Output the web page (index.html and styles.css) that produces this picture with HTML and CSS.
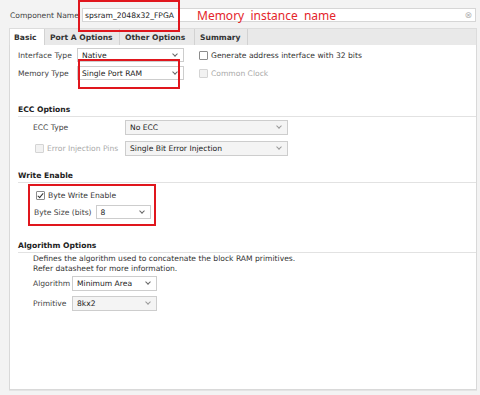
FILE: index.html
```html
<!DOCTYPE html>
<html lang="en">
<head>
  <meta charset="UTF-8" />
  <title>Block Memory Generator</title>
  <link rel="stylesheet" href="styles.css">
</head>
<body>

<div class="top">
  <span class="top-label">Component Name</span>
  <div class="name-input">
    <span class="name-value">spsram_2048x32_FPGA</span>
    <span class="note">Memory&nbsp; instance&nbsp; name</span>
    <span class="clear">&#x2297;</span>
  </div>
  <div class="mark mark-name"></div>
</div>

<div class="tabs">
  <div class="tab active">Basic</div>
  <div class="tab">Port A Options</div>
  <div class="tab">Other Options</div>
  <div class="tab">Summary</div>
</div>

<div class="panel">

  <div class="iface">
    <span class="label">Interface Type</span>
    <div class="select w-iface"><span>Native</span><i class="chev"></i></div>
    <label class="check"><span class="box"></span>Generate address interface with 32 bits</label>

    <span class="label">Memory Type</span>
    <div class="select w-iface"><span>Single Port RAM</span><i class="chev"></i></div>
    <label class="check disabled"><span class="box"></span>Common Clock</label>
    <div class="mark mark-type"></div>
  </div>

  <div class="section">ECC Options</div>
  <div class="rows ecc">
    <span class="label">ECC Type</span>
    <div class="select w-ecc dim"><span>No ECC</span><i class="chev"></i></div>
    <label class="check disabled"><span class="box"></span>Error Injection Pins</label>
    <div class="select w-ecc dim"><span>Single Bit Error Injection</span><i class="chev"></i></div>
  </div>

  <div class="section">Write Enable</div>
  <div class="write-box">
    <label class="check"><span class="box checked"></span>Byte Write Enable</label>
    <div class="inline">
      <span class="label">Byte Size (bits)</span>
      <div class="select w-byte"><span>8</span><i class="chev"></i></div>
    </div>
  </div>

  <div class="section">Algorithm Options</div>
  <div class="desc">
    Defines the algorithm used to concatenate the block RAM primitives.<br>
    Refer datasheet for more information.
  </div>
  <div class="rows algo">
    <span class="label">Algorithm</span>
    <div class="select w-algo"><span>Minimum Area</span><i class="chev"></i></div>
    <span class="label">Primitive</span>
    <div class="select w-algo dim"><span>8kx2</span><i class="chev"></i></div>
  </div>

</div>

</body>
</html>
```

FILE: styles.css
```css
* {
  box-sizing: border-box;
}

html, body {
  margin: 0;
  padding: 0;
  height: 100%;
  background: #f3f3f3;
  font-family: 'DejaVu Sans', sans-serif;
  font-size: 7.6px;
  color: #333;
  white-space: nowrap;
}

/* component name */

.top {
  position: relative;
  display: flex;
  align-items: center;
  height: 28px;
  padding: 2px 4px 0 10px;
}

.top-label {
  width: 72px;
  color: #444;
}

.name-input {
  flex: 1;
  display: flex;
  align-items: center;
  height: 14px;
  background: white;
  border: 1px solid #d6d6d6;
  padding: 0 3px 0 2px;
}

.name-value {
  width: 112px;
  color: #222;
}

.note {
  flex: 1;
  font-family: 'Noto Sans', sans-serif;
  font-size: 12px;
  color: #e4252b;
}

.clear {
  color: #b5b5b5;
  font-size: 9px;
}

.mark {
  position: absolute;
  border: 2px solid #e0161d;
}

.mark-name {
  left: 78px;
  top: 0;
  width: 102px;
  height: 32px;
}

/* tabs */

.tabs {
  display: flex;
  height: 17px;
  margin: 0 3px 0 9px;
  background: #e9e9e9;
  border: 1px solid #dcdcdc;
  border-bottom: none;
}

.tab {
  display: flex;
  align-items: center;
  padding: 0 5px;
  font-weight: bold;
  color: #333;
  border-right: 1px solid #d2d2d2;
}

.tab.active {
  width: 35px;
  background: white;
  padding-left: 4px;
}

.tab:nth-child(2),
.tab:nth-child(3) {
  width: 75px;
}

.tab:nth-child(4) {
  width: 53px;
}

/* panel */

.panel {
  height: 345px;
  margin: 0 3px 0 9px;
  padding: 3px 0 0 8px;
  background: white;
  border: 1px solid #d9d9d9;
  border-top: none;
  box-shadow: 0 1px 0 #e4e4e4;
}

.label {
  color: #444;
}

.iface {
  position: relative;
  display: grid;
  grid-template-columns: 59px 107px auto;
  row-gap: 4px;
  align-items: center;
}

.iface .check {
  margin-left: 15px;
}

.mark-type {
  left: 60px;
  top: 11px;
  width: 102px;
  height: 30px;
}

.select {
  display: flex;
  align-items: center;
  justify-content: space-between;
  height: 14px;
  padding: 0 6px 0 4px;
  background: white;
  border: 1px solid #cdcdcd;
  color: #222;
}

.select.dim {
  background: #f4f4f4;
}

.chev {
  width: 4px;
  height: 4px;
  margin-top: -3px;
  border-right: 1px solid #666;
  border-bottom: 1px solid #666;
  transform: rotate(45deg);
}

.select.dim .chev {
  border-color: #999;
}

.w-iface { width: 107px; }
.w-ecc { width: 163px; height: 15px; }
.w-byte { width: 55px; }
.w-algo { width: 85px; height: 15px; }

.check {
  display: flex;
  align-items: center;
  gap: 3px;
  color: #333;
}

.check.disabled {
  color: #aaa;
}

.box {
  width: 9px;
  height: 9px;
  border: 1px solid #8c8c8c;
  border-radius: 1px;
  background: white;
}

.check.disabled .box {
  border-color: #d4d4d4;
  background: #f2f2f2;
}

.box.checked {
  position: relative;
}

.box.checked::after {
  content: "";
  position: absolute;
  left: 2px;
  top: 0;
  width: 2px;
  height: 5px;
  border-right: 1.3px solid #333;
  border-bottom: 1.3px solid #333;
  transform: rotate(40deg);
}

/* sections */

.section {
  height: 13px;
  line-height: 12px;
  font-weight: bold;
  color: #222;
  border-bottom: 1px solid #e2e2e2;
  margin-top: 24px;
}

.rows {
  display: grid;
  align-items: center;
  padding-left: 15px;
  margin-top: 3px;
}

.ecc {
  grid-template-columns: 92px auto;
  row-gap: 6px;
}

.ecc .check {
  padding-left: 2px;
}

.ecc + .section,
.write-box + .section {
  margin-top: 14px;
}

.write-box {
  display: flex;
  flex-direction: column;
  gap: 5px;
  width: 128px;
  height: 42px;
  margin: 1px 0 0 10px;
  padding: 5px 0 0 4px;
  border: 2px solid #e0161d;
}

.write-box .check {
  padding-left: 2px;
}

.inline {
  display: flex;
  align-items: center;
  gap: 4px;
}

.desc {
  margin-top: 1px;
  padding-left: 15px;
  line-height: 10px;
  color: #333;
}

.algo {
  grid-template-columns: 39px auto;
  row-gap: 5px;
  margin-top: 2px;
}

.algo .select {
  justify-self: start;
}
```
